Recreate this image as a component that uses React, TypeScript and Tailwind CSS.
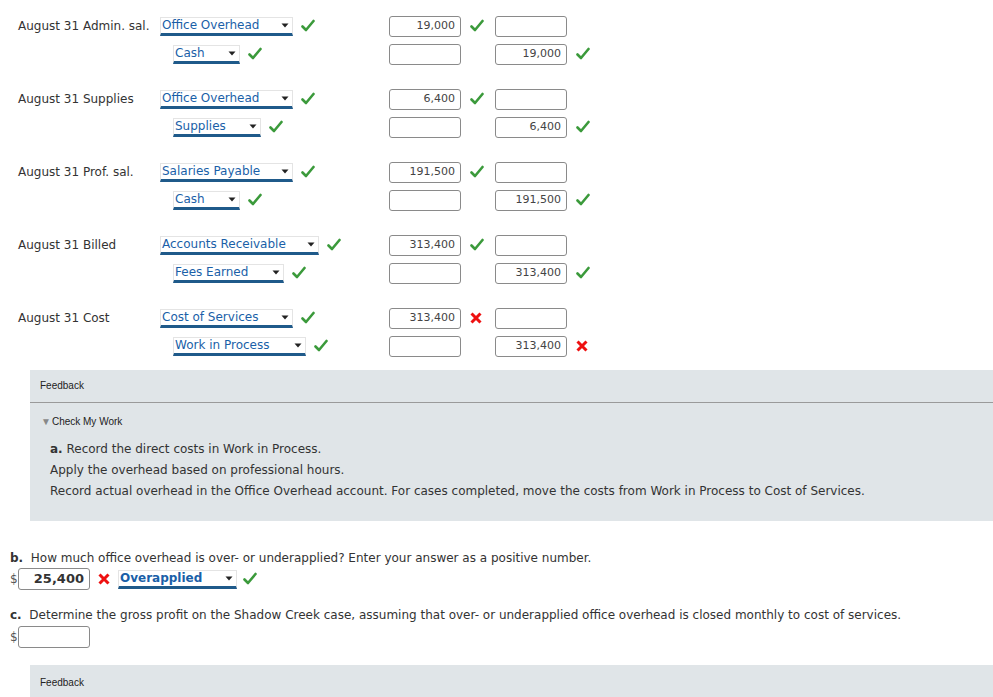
import React from 'react'

const Check = () => (
    <svg width="14" height="14" viewBox="0 0 14 14" className="shrink-0">
        <path d="M1.5 7.5 L5 11 L12.5 2" fill="none" stroke="#3b9a3b" strokeWidth="2.6" strokeLinecap="round" strokeLinejoin="round" />
    </svg>
)

const Cross = () => (
    <svg width="12" height="12" viewBox="0 0 12 12" className="shrink-0">
        <path d="M1.5 1.5 L10.5 10.5 M10.5 1.5 L1.5 10.5" stroke="#ee1111" strokeWidth="3" />
    </svg>
)

const Arrow = () => (
    <svg width="8" height="5" viewBox="0 0 8 5" className="shrink-0">
        <path d="M0.5 0.5 L7.5 0.5 L4 4.5 Z" fill="#222" />
    </svg>
)

interface SelectProps {
    label: string
    width: number
    bold?: boolean
}

const Select = ({ label, width, bold }: SelectProps) => (
    <div
        className={`flex h-[19px] items-center justify-between border border-[#e4e4e4] border-b-[3px] border-b-[#1f5a8a] bg-white pl-[1px] pr-[3px] text-[12px] leading-none text-[#1a5fa8] ${bold ? 'font-bold' : ''}`}
        style={{ width }}
    >
        <span>{label}</span>
        <Arrow />
    </div>
)

const Amount = ({ value }: { value?: string }) => (
    <div className="flex h-[21px] w-[72px] items-center justify-end rounded-[3px] border border-[#8a8a8a] bg-white pr-[5px] text-[11px] text-[#444]">
        {value}
    </div>
)

interface Line {
    account: string
    width: number
    debit?: string
    credit?: string
    mark: 'ok' | 'bad'
}

interface Entry {
    label: string
    lines: [Line, Line]
}

const entries: Entry[] = [
    {
        label: 'August 31 Admin. sal.',
        lines: [
            { account: 'Office Overhead', width: 133, debit: '19,000', mark: 'ok' },
            { account: 'Cash', width: 67, credit: '19,000', mark: 'ok' },
        ],
    },
    {
        label: 'August 31 Supplies',
        lines: [
            { account: 'Office Overhead', width: 133, debit: '6,400', mark: 'ok' },
            { account: 'Supplies', width: 88, credit: '6,400', mark: 'ok' },
        ],
    },
    {
        label: 'August 31 Prof. sal.',
        lines: [
            { account: 'Salaries Payable', width: 133, debit: '191,500', mark: 'ok' },
            { account: 'Cash', width: 67, credit: '191,500', mark: 'ok' },
        ],
    },
    {
        label: 'August 31 Billed',
        lines: [
            { account: 'Accounts Receivable', width: 159, debit: '313,400', mark: 'ok' },
            { account: 'Fees Earned', width: 111, credit: '313,400', mark: 'ok' },
        ],
    },
    {
        label: 'August 31 Cost',
        lines: [
            { account: 'Cost of Services', width: 133, debit: '313,400', mark: 'bad' },
            { account: 'Work in Process', width: 133, credit: '313,400', mark: 'bad' },
        ],
    },
]

const Mark = ({ mark }: { mark: 'ok' | 'bad' }) => (mark === 'ok' ? <Check /> : <Cross />)

const JournalRow = ({ label, line, second }: { label?: string; line: Line; second?: boolean }) => (
    <div className="flex h-[28px] items-center">
        <div className="w-[142px]">{label}</div>
        <div className={`flex w-[229px] items-center gap-[8px] ${second ? 'pl-[13px]' : ''}`}>
            <Select label={line.account} width={line.width} />
            <Check />
        </div>
        <Amount value={line.debit} />
        <div className="flex w-[34px] items-center pl-[9px]">
            {line.debit && <Mark mark={line.mark} />}
        </div>
        <Amount value={line.credit} />
        <div className="flex w-[34px] items-center pl-[9px]">
            {line.credit && <Mark mark={line.mark} />}
        </div>
    </div>
)

const FeedbackLabel = () => (
    <div className="pl-[10px] font-['Liberation_Sans',Arial,sans-serif] text-[10px] text-[#222]">Feedback</div>
)

export default function App() {
    return (
        <div className="h-[697px] w-[993px] overflow-hidden bg-white font-['DejaVu_Sans',Verdana,sans-serif] text-[12px] text-[#333]">
            <div className="flex flex-col gap-[17px] pl-[18px] pt-[12px]">
                {entries.map((entry) => (
                    <div key={entry.label}>
                        <JournalRow label={entry.label} line={entry.lines[0]} />
                        <JournalRow line={entry.lines[1]} second />
                    </div>
                ))}
            </div>

            <div className="ml-[30px] mt-[10px] h-[151px] bg-[#e0e5e8] pt-[8px]">
                <FeedbackLabel />
                <div className="mt-[9px] border-t border-[#9a9a9a]" />
                <div className="mt-[11px] flex items-center gap-[1px] pl-[11px] font-['Liberation_Sans',Arial,sans-serif] text-[10px] text-[#222]">
                    <span className="text-[10px] leading-none text-[#888]">▼</span>
                    <span>Check My Work</span>
                </div>
                <div className="mt-[10px] pl-[20px] leading-[21px]">
                    <p>
                        <span className="font-bold">a.</span> Record the direct costs in Work in Process.
                    </p>
                    <p>Apply the overhead based on professional hours.</p>
                    <p>
                        Record actual overhead in the Office Overhead account. For cases completed, move the costs from
                        Work in Process to Cost of Services.
                    </p>
                </div>
            </div>

            <div className="mt-[28px] pl-[10px]">
                <p>
                    <span className="font-bold">b.</span>&nbsp; How much office overhead is over- or underapplied? Enter
                    your answer as a positive number.
                </p>
                <div className="mt-[1px] flex items-center">
                    <span className="w-[8px] text-[#555]">$</span>
                    <div className="flex h-[22px] w-[72px] items-center justify-end rounded-[3px] border border-[#8a8a8a] bg-white pr-[5px] text-[13px] font-bold text-[#333]">
                        25,400
                    </div>
                    <div className="flex w-[28px] justify-center">
                        <Cross />
                    </div>
                    <Select label="Overapplied" width={119} bold />
                    <div className="ml-[6px]">
                        <Check />
                    </div>
                </div>

                <p className="mt-[16px]">
                    <span className="font-bold">c.</span>&nbsp; Determine the gross profit on the Shadow Creek case,
                    assuming that over- or underapplied office overhead is closed monthly to cost of services.
                </p>
                <div className="mt-[2px] flex items-center">
                    <span className="w-[8px] text-[#555]">$</span>
                    <div className="h-[22px] w-[72px] rounded-[3px] border border-[#8a8a8a] bg-white" />
                </div>
            </div>

            <div className="ml-[30px] mt-[17px] h-[40px] bg-[#e0e5e8] pt-[10px]">
                <FeedbackLabel />
            </div>
        </div>
    )
}
